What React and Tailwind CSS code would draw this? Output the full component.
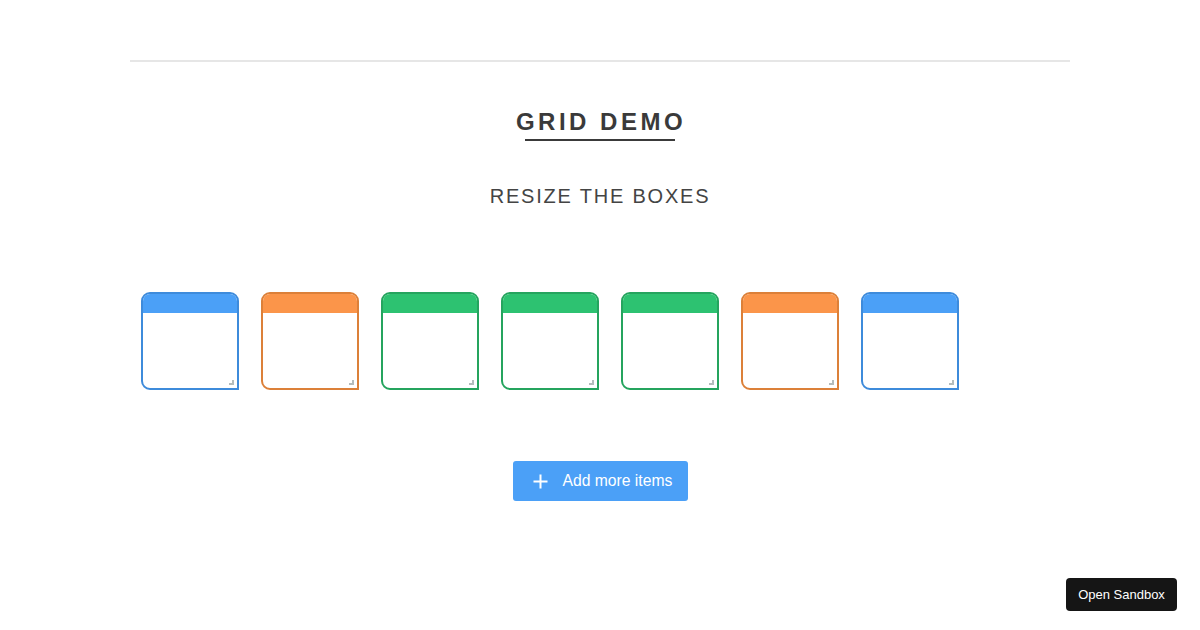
import React from "react";

const boxes = [
  { head: "bg-[#4ba0f7]", border: "border-[#3e8bdb]" },
  { head: "bg-[#fb954a]", border: "border-[#dc8039]" },
  { head: "bg-[#2dc271]", border: "border-[#25a45e]" },
  { head: "bg-[#2dc271]", border: "border-[#25a45e]" },
  { head: "bg-[#2dc271]", border: "border-[#25a45e]" },
  { head: "bg-[#fb954a]", border: "border-[#dc8039]" },
  { head: "bg-[#4ba0f7]", border: "border-[#3e8bdb]" },
];

function GridBox({ head, border }) {
  return (
    <div
      className={`relative h-[98px] w-[98px] overflow-hidden rounded-[9px] rounded-br-none border-2 bg-white ${border}`}
    >
      <div className={`h-[19px] ${head}`} />
      <span className="absolute bottom-[3px] right-[3px] h-[5px] w-[5px] border-b-2 border-r-2 border-[#b4bcbc]" />
    </div>
  );
}

export default function App() {
  return (
    <div
      className="min-h-[630px] bg-white text-[#3a3a3a]"
      style={{ fontFamily: '"Liberation Sans", Arial, sans-serif' }}
    >
      <div className="mx-auto w-[940px] pt-[60px]">
        <div className="h-[2px] bg-[#e6e6e6]" />

        <div className="mt-[48px] flex flex-col items-center">
          <h1 className="pl-[2px] text-[24px] font-bold leading-[24px] tracking-[3.5px] text-[#3a3a3a]">
            GRID DEMO
          </h1>
          <div className="mt-[5px] h-[2px] w-[150px] bg-[#3a3a3a]" />
          <h2 className="mt-[45px] text-[20px] leading-[20px] tracking-[1.8px] text-[#444]">
            RESIZE THE BOXES
          </h2>
        </div>

        <div className="mt-[86px] flex gap-[22px] pl-[11px]">
          {boxes.map((b, i) => (
            <GridBox key={i} {...b} />
          ))}
        </div>

        <div className="mt-[71px] flex justify-center">
          <button
            type="button"
            className="flex h-[40px] w-[175px] items-center rounded-[3px] bg-[#4ba0f7] pl-[20px] text-[15.7px] text-white"
          >
            <svg width="15" height="15" viewBox="0 0 15 15" className="mr-[15px]">
              <path d="M7.5 0.5v14M0.5 7.5h14" stroke="white" strokeWidth="2" fill="none" />
            </svg>
            Add more items
          </button>
        </div>
      </div>

      <button
        type="button"
        className="fixed bottom-[19px] right-[23px] flex h-[33px] w-[111px] items-center justify-center rounded-[4px] bg-[#151515] text-[13px] text-white"
      >
        Open Sandbox
      </button>
    </div>
  );
}
